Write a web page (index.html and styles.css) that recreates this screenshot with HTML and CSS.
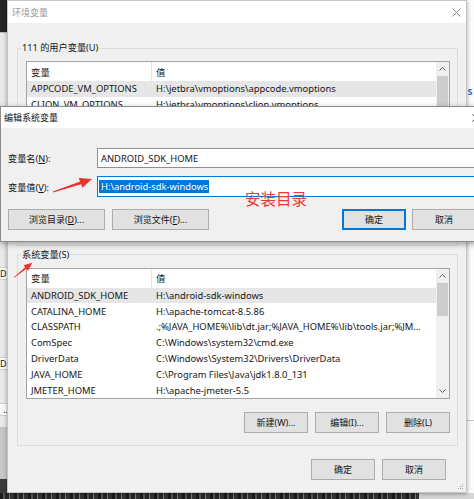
FILE: index.html
```html
<!DOCTYPE html>
<html lang="zh-CN">
<head>
<meta charset="utf-8">
<title>环境变量</title>
<link rel="stylesheet" href="styles.css">
</head>
<body>
<div class="desk">
  <div class="bg-top-left"></div>
  <div class="bg-left">
    <div class="frag f1">D.</div>
    <div class="frag f2">D.</div>
    <div class="frag f3">..</div>
    <div class="frag f4"></div>
    <div class="frag f5"></div>
  </div>
  <div class="bg-right">
    <span class="bg-glyph">S</span>
    <span class="bg-line"></span>
  </div>
  <div class="bg-bottom"></div>

  <section class="win main-win">
    <header class="titlebar">
      <span class="title">环境变量</span>
      <svg class="close" viewBox="0 0 9 9" width="9" height="9"><path d="M0.5 0.5L8.5 8.5M8.5 0.5L0.5 8.5" stroke="#8a8a8a" stroke-width="1" fill="none"/></svg>
    </header>
    <div class="win-body">
      <fieldset class="group group-user">
        <legend>111 的用户变量(U)</legend>
        <div class="list list-user">
          <div class="list-main">
            <div class="list-head"><span class="c-name">变量</span><span class="c-val">值</span></div>
            <div class="row sel-row"><span class="c-name">APPCODE_VM_OPTIONS</span><span class="c-val">H:\jetbra\vmoptions\appcode.vmoptions</span></div>
            <div class="row"><span class="c-name">CLION_VM_OPTIONS</span><span class="c-val">H:\jetbra\vmoptions\clion.vmoptions</span></div>
            <div class="row"><span class="c-name">DATAGRIP_VM_OPTIONS</span><span class="c-val">H:\jetbra\vmoptions\datagrip.vmoptions</span></div>
            <div class="row"><span class="c-name">GOLAND_VM_OPTIONS</span><span class="c-val">H:\jetbra\vmoptions\goland.vmoptions</span></div>
            <div class="row"><span class="c-name">IDEA_VM_OPTIONS</span><span class="c-val">H:\jetbra\vmoptions\idea.vmoptions</span></div>
          </div>
          <div class="scrollbar">
            <div class="sb-arrow"><svg viewBox="0 0 7 4" width="7" height="4"><path d="M0.5 3.5L3.5 0.5L6.5 3.5" stroke="#606060" fill="none"/></svg></div>
            <div class="sb-thumb"></div>
            <div class="sb-track"></div>
            <div class="sb-arrow"><svg viewBox="0 0 7 4" width="7" height="4"><path d="M0.5 0.5L3.5 3.5L6.5 0.5" stroke="#606060" fill="none"/></svg></div>
          </div>
        </div>
        <div class="btn-row">
          <button class="btn">新建(N)...</button>
          <button class="btn">编辑(E)...</button>
          <button class="btn">删除(D)</button>
        </div>
      </fieldset>

      <fieldset class="group group-sys">
        <legend>系统变量(S)</legend>
        <div class="list list-sys">
          <div class="list-main">
            <div class="list-head"><span class="c-name">变量</span><span class="c-val">值</span></div>
            <div class="row sel-row"><span class="c-name">ANDROID_SDK_HOME</span><span class="c-val">H:\android-sdk-windows</span></div>
            <div class="row"><span class="c-name">CATALINA_HOME</span><span class="c-val">H:\apache-tomcat-8.5.86</span></div>
            <div class="row"><span class="c-name">CLASSPATH</span><span class="c-val">.;%JAVA_HOME%\lib\dt.jar;%JAVA_HOME%\lib\tools.jar;%JM...</span></div>
            <div class="row"><span class="c-name">ComSpec</span><span class="c-val">C:\Windows\system32\cmd.exe</span></div>
            <div class="row"><span class="c-name">DriverData</span><span class="c-val">C:\Windows\System32\Drivers\DriverData</span></div>
            <div class="row"><span class="c-name">JAVA_HOME</span><span class="c-val">C:\Program Files\Java\jdk1.8.0_131</span></div>
            <div class="row"><span class="c-name">JMETER_HOME</span><span class="c-val">H:\apache-jmeter-5.5</span></div>
          </div>
          <div class="scrollbar">
            <div class="sb-arrow"><svg viewBox="0 0 7 4" width="7" height="4"><path d="M0.5 3.5L3.5 0.5L6.5 3.5" stroke="#606060" fill="none"/></svg></div>
            <div class="sb-thumb"></div>
            <div class="sb-track"></div>
            <div class="sb-arrow"><svg viewBox="0 0 7 4" width="7" height="4"><path d="M0.5 0.5L3.5 3.5L6.5 0.5" stroke="#606060" fill="none"/></svg></div>
          </div>
        </div>
        <div class="btn-row">
          <button class="btn">新建(W)...</button>
          <button class="btn">编辑(I)...</button>
          <button class="btn">删除(L)</button>
        </div>
      </fieldset>

      <div class="btn-row footer-btns">
        <button class="btn">确定</button>
        <button class="btn">取消</button>
      </div>
    </div>
    <svg class="grip" viewBox="0 0 8 8" width="8" height="8">
      <rect x="6" y="2" width="1" height="1" fill="#a8a8a8"/>
      <rect x="4" y="4" width="1" height="1" fill="#a8a8a8"/>
      <rect x="6" y="4" width="1" height="1" fill="#a8a8a8"/>
      <rect x="2" y="6" width="1" height="1" fill="#a8a8a8"/>
      <rect x="4" y="6" width="1" height="1" fill="#a8a8a8"/>
      <rect x="6" y="6" width="1" height="1" fill="#a8a8a8"/>
    </svg>
  </section>

  <section class="win edit-win">
    <header class="titlebar active">
      <span class="title">编辑系统变量</span>
      <svg class="close" viewBox="0 0 8 8" width="8" height="8"><path d="M0.5 0.5L7.5 7.5M7.5 0.5L0.5 7.5" stroke="#333" stroke-width="1" fill="none"/></svg>
    </header>
    <div class="edit-body">
      <div class="field">
        <label class="field-label">变量名(<u>N</u>):</label>
        <div class="input">ANDROID_SDK_HOME</div>
      </div>
      <div class="field">
        <label class="field-label">变量值(<u>V</u>):</label>
        <div class="input focused"><span class="sel">H:\android-sdk-windows</span></div>
      </div>
      <div class="edit-btns">
        <button class="btn wide">浏览目录(<u>D</u>)...</button>
        <button class="btn wide">浏览文件(<u>F</u>)...</button>
        <span class="spacer"></span>
        <button class="btn default">确定</button>
        <button class="btn">取消</button>
      </div>
    </div>
  </section>

  <div class="note">安装目录</div>
  <svg class="arrows" viewBox="0 0 474 499" width="474" height="499">
    <polygon fill="#e8322d" points="52.9,191.6 80.1,181.4 78.8,177.9 92,179 82.4,187.7 81.1,184.2 53.1,192.4"/>
    <polygon fill="#e8322d" points="13.8,277.3 25.2,267.2 23.6,265.2 32.2,262.8 28.1,270.8 26.4,268.8 14.2,277.8"/>
  </svg>
</div>
</body>
</html>
```

FILE: styles.css
```css
* { box-sizing: border-box; }
html, body { margin: 0; padding: 0; }
body {
  width: 474px;
  height: 499px;
  overflow: hidden;
  font-family: "Noto Sans", "Noto Sans CJK SC", sans-serif;
  font-size: 9.4px;
  color: #161616;
}
u { text-decoration: underline; text-underline-offset: 1px; }

.desk {
  position: relative;
  width: 474px;
  height: 499px;
  overflow: hidden;
  background: #d9d9d9;
}

/* desktop pieces behind the windows */
.bg-top-left {
  position: absolute; left: 0; top: 0;
  width: 8px; height: 32px;
  background: #242424;
}
.bg-left {
  position: absolute; left: 0; top: 32px;
  width: 8px; height: 461px;
  background: #e9e9e9;
  border-top: 1px solid #b8b8b8;
  display: flex; flex-direction: column;
}
.frag {
  height: 13px;
  background: #fafafa;
  border-top: 1px solid #cfcfcf;
  border-bottom: 1px solid #cfcfcf;
  text-align: right;
  line-height: 11px;
  font-size: 9px;
  overflow: hidden;
  white-space: nowrap;
}
.f1 { margin-top: 234px; }
.f2 { margin-top: 77px; }
.f3 { margin-top: 33px; }
.f4 { margin-top: 11px; height: 52px; background: #c7c7c7; border: 0; }
.f5 { height: 14px; background: #3a3a3a; border: 0; }

.bg-right {
  position: absolute; left: 466px; top: 0;
  width: 8px; height: 493px;
  background: #fbfbfb;
  display: flex; flex-direction: column;
  align-items: center;
}
.bg-glyph {
  margin-top: 84px;
  color: #2a6fc4;
  font-size: 9px;
  line-height: 16px;
  font-weight: bold;
}
.bg-line {
  margin-top: 320px;
  width: 100%;
  height: 1px;
  background: #c8c8c8;
}
.bg-bottom {
  position: absolute; left: 0; top: 493px;
  width: 474px; height: 6px;
  background:
    linear-gradient(90deg, transparent 0 419px, #d6d6d6 419px),
    repeating-linear-gradient(90deg, #1b1b1b 0 3px, #545454 3px 5px, #262626 5px 9px, #7a7a7a 9px 10px, #333 10px 14px);
}

/* windows */
.win {
  position: absolute;
  background: #f0f0f0;
  display: flex;
  flex-direction: column;
}
.main-win {
  left: 7px; top: 0;
  width: 460px; height: 493px;
  border: 1px solid #c4c4c4;
  box-shadow: 0 1px 4px rgba(0,0,0,0.35);
}
.titlebar {
  flex: none;
  height: 22px;
  background: #fff;
  display: flex;
  align-items: center;
  justify-content: space-between;
  padding: 0 5px 0 4px;
}
.title { font-size: 9px; color: #9a9a9a; }
.titlebar.active .title { color: #111; }

.win-body {
  flex: 1;
  padding: 18px 8px 0 9px;
  display: flex;
  flex-direction: column;
}

.group {
  margin: 0;
  padding: 6px 7px 12px 3px;
  border: 1px solid #dcdcdc;
  min-width: 0;
  display: flex;
  flex-direction: column;
}
.group legend {
  padding: 0 1px;
  line-height: 14px;
  font-size: 9.2px;
}
.group-sys { margin-top: 2px; }

.list {
  margin-left: 5px;
  border: 1px solid #a3a3a3;
  background: #fff;
  display: flex;
  overflow: hidden;
}
.list-user { height: 138px; }
.list-sys { height: 131.6px; }
.list-main {
  flex: 1;
  min-width: 0;
  overflow: hidden;
}
.list-head {
  height: 19px;
  display: flex;
  align-items: center;
}
.list-head .c-name { border-right: 1px solid #e3e3e3; height: 100%; display: flex; align-items: center; }
.row {
  height: 15.8px;
  display: flex;
  align-items: center;
  white-space: nowrap;
}
.sel-row { background: #e6e6e6; }
.c-name { flex: none; width: 125px; padding-left: 4px; overflow: hidden; }
.c-val { flex: 1; padding-left: 4px; overflow: hidden; }

.scrollbar {
  flex: none;
  width: 13px;
  background: #f0f0f0;
  display: flex;
  flex-direction: column;
}
.sb-arrow {
  height: 14px;
  display: flex;
  align-items: center;
  justify-content: center;
}
.sb-arrow svg { display: block; }
.sb-thumb {
  height: 33px;
  margin: 0 1px;
  background: #cdcdcd;
}
.sb-track { flex: 1; }

.btn-row {
  display: flex;
  justify-content: flex-end;
  gap: 7px;
  margin-top: 12.5px;
}
.btn {
  width: 64px;
  height: 21px;
  padding: 0;
  margin: 0;
  font-family: inherit;
  font-size: 9px;
  color: #111;
  background: #e1e1e1;
  border: 1px solid #adadad;
  display: flex;
  align-items: center;
  justify-content: center;
  white-space: nowrap;
}
.btn.wide { width: 97px; }
.btn.default { border-color: #0078d7; box-shadow: inset 0 0 0 1px #0078d7; }
.footer-btns { margin-top: 13px; margin-right: 12px; }

.grip {
  position: absolute;
  right: 2px; bottom: 2px;
}

/* edit dialog */
.edit-win {
  left: 0; top: 106px;
  width: 488px; height: 136px;
  border: 1px solid #8c8c8c;
  box-shadow: 0 2px 6px rgba(0,0,0,0.35);
}
.edit-win .titlebar {
  height: 21px;
  padding: 0 7px 0 3px;
}
.edit-body {
  flex: 1;
  padding: 20px 11px 0 7px;
  display: flex;
  flex-direction: column;
}
.field {
  display: flex;
  align-items: center;
}
.field + .field { margin-top: 8px; }
.field-label {
  flex: none;
  width: 89px;
  font-size: 9.2px;
}
.input {
  flex: 1;
  height: 20px;
  background: #fff;
  border: 1px solid #8f8f8f;
  padding-left: 3px;
  display: flex;
  align-items: center;
  white-space: nowrap;
}
.input.focused {
  height: 21px;
  border-color: #0078d7;
  padding-left: 1px;
}
.sel {
  background: #0078d7;
  color: #fff;
  line-height: 13px;
  padding: 0 1px 0 2px;
}
.edit-btns {
  display: flex;
  margin-top: 12px;
  gap: 7px;
}
.edit-btns .btn:last-child { margin-left: -1px; }
.spacer { flex: 1; }

/* annotations */
.note {
  position: absolute;
  left: 245px; top: 188px;
  font-family: "Noto Sans CJK SC", sans-serif;
  font-size: 15.5px;
  line-height: 20px;
  color: #ea3a35;
}
.arrows {
  position: absolute;
  left: 0; top: 0;
  pointer-events: none;
}
```
